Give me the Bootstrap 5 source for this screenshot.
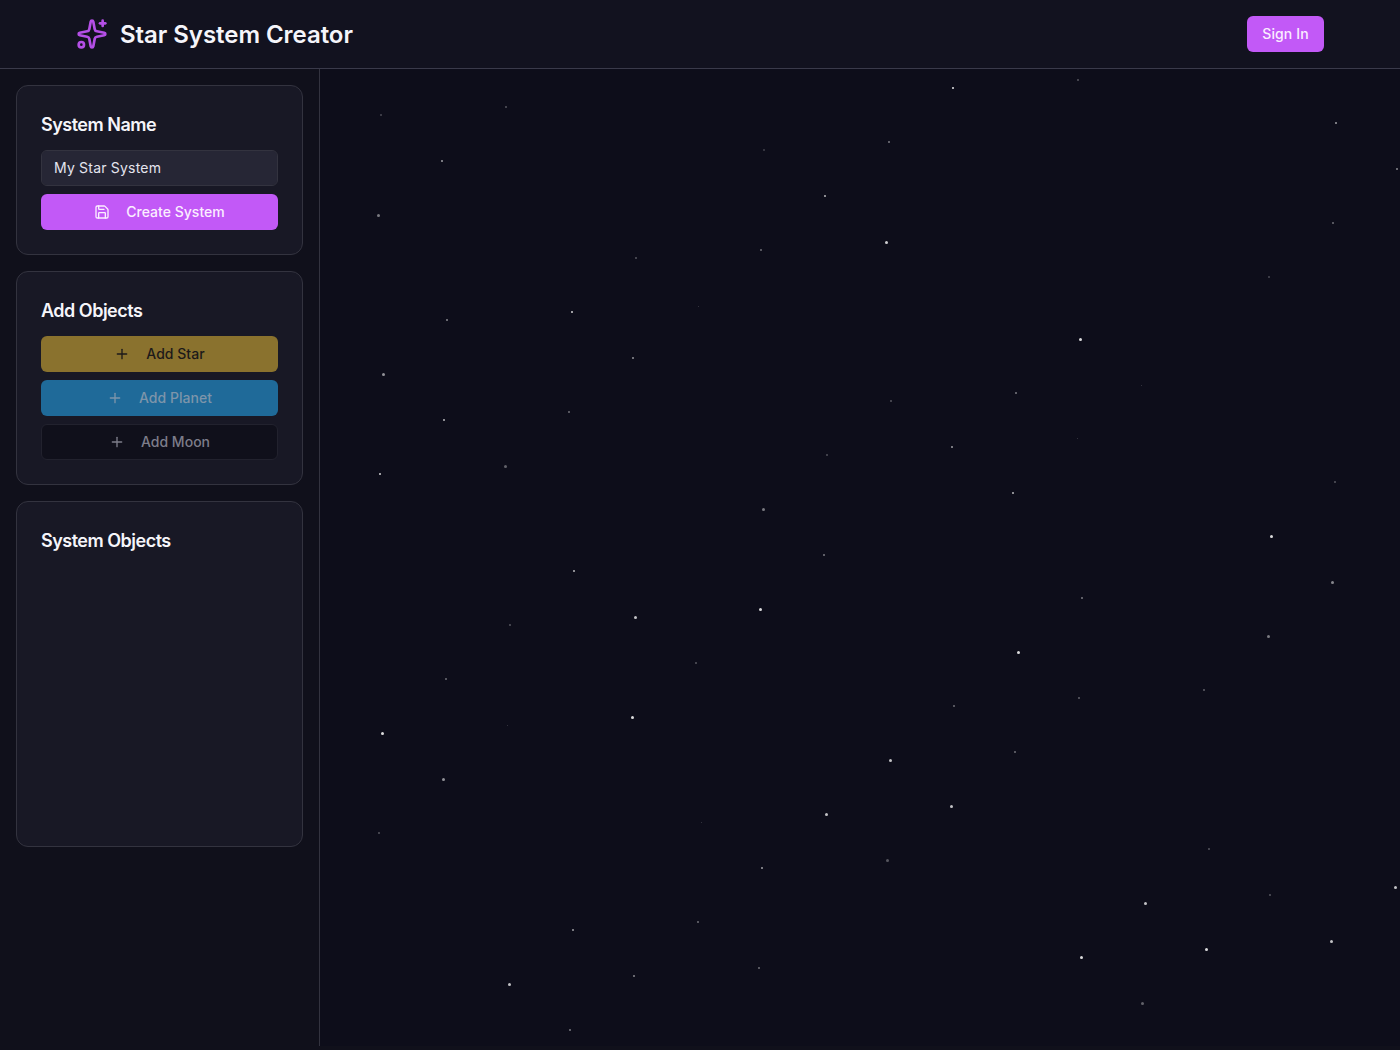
<!DOCTYPE html>
<html lang="en">
<head>
    <meta charset="UTF-8">
    <meta name="viewport" content="width=device-width, initial-scale=1.0">
    <title>Star System Creator</title>
    <link href="https://cdn.jsdelivr.net/npm/bootstrap@5.3.3/dist/css/bootstrap.min.css" rel="stylesheet">
    <style>
        body {
            background-color: #10101b;
            font-family: Inter, "Liberation Sans", sans-serif;
            color: #f5f5fa;
            min-height: 1050px;
        }

        .top-bar.navbar {
            height: 69px;
            padding: 0 76px;
            background-color: #12121f;
            border-bottom: 1px solid #3a3a4a;
        }

        .brand-group {
            gap: 12px;
        }

        .brand-name {
            font-size: 24px;
            font-weight: 600;
            letter-spacing: -.05px;
            padding-top: 1px;
            color: #f5f5fa;
        }

        .brand-icon {
            width: 32px;
            height: 32px;
            color: #b44fe6;
        }

        .btn-icon {
            width: 16px;
            height: 16px;
            flex-shrink: 0;
        }

        .work-area {
            height: 977px;
        }

        .side-panel {
            width: 320px;
            padding: 16px;
            border-right: 1px solid #33333f;
            flex-shrink: 0;
        }

        .panel-card {
            background-color: #181825;
            border: 1px solid #33333f;
            border-radius: 12px;
            padding: 24px;
            color: #f5f5fa;
        }

        .panel-card.objects-card {
            height: 346px;
        }

        .panel-title {
            font-size: 18px;
            font-weight: 600;
            line-height: 28px;
            letter-spacing: -.5px;
            padding-top: 1px;
            margin-bottom: 11px;
        }

        .name-input.form-control {
            height: 36px;
            padding: 0 12px 2px;
            font-size: 14px;
            letter-spacing: .2px;
            color: #e4e4ee;
            background-color: #262635;
            border: 1px solid #33333f;
            border-radius: 6px;
        }

        .tool-btn.btn {
            height: 36px;
            padding: 0 12px;
            font-size: 14px;
            font-weight: 500;
            border-radius: 6px;
            letter-spacing: .02px;
            display: flex;
            align-items: center;
            justify-content: center;
            gap: 16px;
        }

        .tool-btn span {
            margin-top: -1px;
        }

        .tool-purple.btn {
            background-color: #c259f7;
            border: 0;
            color: #fbeeff;
        }

        .tool-gold.btn {
            background-color: #8a722e;
            border: 0;
            color: #1d1a1a;
        }

        .tool-blue.btn {
            background-color: #1f6a99;
            border: 0;
            color: #7d95aa;
        }

        .tool-dark.btn {
            background-color: #10101b;
            border: 1px solid #22222e;
            color: #7d7d8a;
        }

        .sign-btn.btn {
            width: 77px;
            height: 36px;
            padding: 0 0 1px;
            font-size: 14px;
            font-weight: 500;
            letter-spacing: .1px;
            border-radius: 6px;
        }

        .sky {
            flex-grow: 1;
            position: relative;
            background-color: #0d0d1a;
            overflow: hidden;
        }

        .sky-dot {
            position: absolute;
            border-radius: 50%;
            background-color: #fff;
        }
    </style>
</head>
<body>
    <nav class="navbar top-bar">
        <div class="d-flex justify-content-between align-items-center w-100">
            <div class="d-flex align-items-center brand-group">
                <svg class="brand-icon" viewBox="0 0 24 24" fill="none" stroke="currentColor" stroke-width="2" stroke-linecap="round" stroke-linejoin="round">
                    <path d="M11.017 2.814a1 1 0 0 1 1.966 0l1.051 5.558a2 2 0 0 0 1.594 1.594l5.558 1.051a1 1 0 0 1 0 1.966l-5.558 1.051a2 2 0 0 0-1.594 1.594l-1.051 5.558a1 1 0 0 1-1.966 0l-1.051-5.558a2 2 0 0 0-1.594-1.594l-5.558-1.051a1 1 0 0 1 0-1.966l5.558-1.051a2 2 0 0 0 1.594-1.594z"/>
                    <path d="M20 2v4"/>
                    <path d="M22 4h-4"/>
                    <circle cx="4" cy="20" r="2"/>
                </svg>
                <span class="brand-name">Star System Creator</span>
            </div>
            <button class="btn tool-purple sign-btn" type="button">Sign In</button>
        </div>
    </nav>

    <div class="d-flex work-area">
        <aside class="side-panel d-flex flex-column gap-3">
            <div class="panel-card">
                <h2 class="panel-title">System Name</h2>
                <div class="d-flex flex-column gap-2">
                    <input class="form-control name-input" type="text" value="My Star System">
                    <button class="btn tool-btn tool-purple w-100" type="button">
                        <svg class="btn-icon" viewBox="0 0 24 24" fill="none" stroke="currentColor" stroke-width="2" stroke-linecap="round" stroke-linejoin="round">
                            <path d="M15.2 3a2 2 0 0 1 1.4.6l3.8 3.8a2 2 0 0 1 .6 1.4V19a2 2 0 0 1-2 2H5a2 2 0 0 1-2-2V5a2 2 0 0 1 2-2z"/>
                            <path d="M17 21v-7a1 1 0 0 0-1-1H8a1 1 0 0 0-1 1v7"/>
                            <path d="M7 3v4a1 1 0 0 0 1 1h7"/>
                        </svg>
                        <span>Create System</span>
                    </button>
                </div>
            </div>

            <div class="panel-card">
                <h2 class="panel-title">Add Objects</h2>
                <div class="d-flex flex-column gap-2">
                    <button class="btn tool-btn tool-gold w-100" type="button">
                        <svg class="btn-icon" viewBox="0 0 24 24" fill="none" stroke="currentColor" stroke-width="2" stroke-linecap="round"><path d="M5 12h14"/><path d="M12 5v14"/></svg>
                        <span>Add Star</span>
                    </button>
                    <button class="btn tool-btn tool-blue w-100" type="button">
                        <svg class="btn-icon" viewBox="0 0 24 24" fill="none" stroke="currentColor" stroke-width="2" stroke-linecap="round"><path d="M5 12h14"/><path d="M12 5v14"/></svg>
                        <span>Add Planet</span>
                    </button>
                    <button class="btn tool-btn tool-dark w-100" type="button">
                        <svg class="btn-icon" viewBox="0 0 24 24" fill="none" stroke="currentColor" stroke-width="2" stroke-linecap="round"><path d="M5 12h14"/><path d="M12 5v14"/></svg>
                        <span>Add Moon</span>
                    </button>
                </div>
            </div>

            <div class="panel-card objects-card">
                <h2 class="panel-title">System Objects</h2>
            </div>
        </aside>

        <main class="sky" id="sky"></main>
    </div>

    <script>
        // x, y in page pixels, then dot size and opacity
        const stars = [
            [953,88,2.5,.9],[1078,80,2,.3],[1336,123,2.5,.6],[506,107,2,.3],[381,115,2,.25],[442,161,2.5,.6],
            [764,150,1.5,.2],[889,142,2.5,.45],[1397,169,2.5,.5],[825,196,2.5,.7],[378,215,3,.45],[1333,223,2.5,.4],
            [886,242,3,.8],[761,250,2.5,.4],[636,258,2,.3],[1269,277,2,.25],[572,312,2.5,.8],[447,320,2.5,.5],
            [698,306,1,.2],[1080,339,3,.85],[633,358,2.5,.55],[383,374,3,.55],[1016,393,2.5,.45],[891,401,2,.3],
            [1141,385,1,.2],[569,412,2,.4],[444,420,2.5,.7],[952,447,2.5,.6],[827,455,1.5,.25],[1077,438,1,.2],
            [380,474,2.5,.8],[505,466,3,.35],[1013,493,2.5,.7],[1335,482,2,.3],[763,509,3,.45],[1271,536,3,.85],
            [824,555,2.5,.45],[574,571,2.5,.7],[1332,582,3,.5],[1082,598,2.5,.45],[635,617,3,.75],[760,609,3,.85],
            [510,625,2,.3],[1268,636,3,.45],[1018,652,3,.85],[696,663,2,.3],[446,679,2.5,.4],[1204,690,2.5,.35],
            [1079,698,2.5,.35],[954,706,2,.4],[632,717,3,.85],[507,725,1,.2],[382,733,3,.85],[1015,752,2,.4],
            [890,760,3,.75],[443,779,3,.55],[951,806,3,.75],[826,814,3,.75],[701,822,1,.2],[379,833,2,.3],
            [1209,849,2,.3],[887,860,3,.3],[762,868,2.5,.6],[1395,887,3,.75],[1270,895,2,.3],[1145,903,3,.75],
            [698,922,2,.4],[573,930,2.5,.6],[1331,941,3,.75],[1206,949,3,.85],[1081,957,3,.85],[759,968,2,.4],
            [634,976,2.5,.5],[509,984,3,.75],[1142,1003,3,.35],[570,1030,2.5,.45]
        ];
        const sky = document.getElementById('sky');
        stars.forEach(([x, y, size, alpha]) => {
            const dot = document.createElement('div');
            dot.className = 'sky-dot';
            dot.style.left = (x - 320 - size / 2) + 'px';
            dot.style.top = (y - 69 - size / 2) + 'px';
            dot.style.width = size + 'px';
            dot.style.height = size + 'px';
            dot.style.opacity = alpha;
            sky.appendChild(dot);
        });
    </script>
    <script src="https://cdn.jsdelivr.net/npm/bootstrap@5.3.3/dist/js/bootstrap.bundle.min.js"></script>
</body>
</html>
